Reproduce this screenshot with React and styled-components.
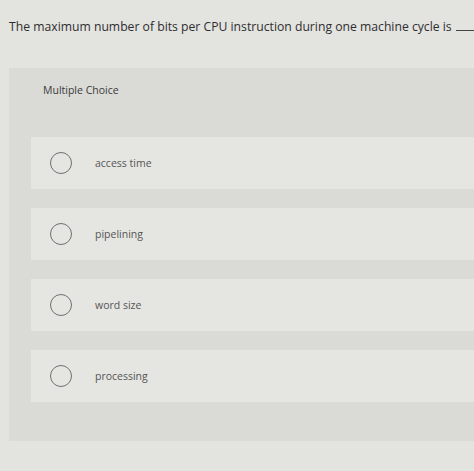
import React from 'react';
import styled, { createGlobalStyle } from 'styled-components';

const Global = createGlobalStyle`
	html, body {
		margin: 0;
		padding: 0;
		background: #e3e3e0;
	}
	body {
		font-family: "Open Sans", Lato, sans-serif;
		overflow: hidden;
	}
`;

const Page = styled.div`
	width: 474px;
	height: 471px;
	padding: 18px 0 0 9px;
	box-sizing: border-box;
	display: flex;
	flex-direction: column;
`;

const Question = styled.p`
	margin: 0;
	font-size: 12.2px;
	line-height: 18px;
	color: #2e2e2e;
	white-space: nowrap;
`;

const Blank = styled.span`
	display: inline-block;
	width: 40px;
	margin-left: 4px;
	border-bottom: 1px solid #444;
	vertical-align: baseline;
`;

const Panel = styled.section`
	margin-top: 32px;
	height: 373px;
	background: #dadad7;
	padding: 15px 0 0 22px;
	box-sizing: border-box;
`;

const Label = styled.div`
	padding-left: 12px;
	font-size: 10.5px;
	line-height: 15px;
	color: #3a3a3a;
`;

const Options = styled.div`
	margin-top: 39px;
	display: flex;
	flex-direction: column;
	gap: 19px;
`;

const Card = styled.div`
	height: 52px;
	background: #e5e5e2;
	display: flex;
	align-items: center;
	padding-left: 19px;
`;

const Radio = styled.span`
	width: 20px;
	height: 20px;
	border: 1.3px solid #707070;
	border-radius: 50%;
	flex-shrink: 0;
`;

const OptionText = styled.span`
	margin-left: 23px;
	font-size: 10.5px;
	color: #555;
`;

const choices = ['access time', 'pipelining', 'word size', 'processing'];

export default function App() {
	return (
		<Page>
			<Global />
			<Question>
				The maximum number of bits per CPU instruction during one machine cycle is<Blank />
			</Question>
			<Panel>
				<Label>Multiple Choice</Label>
				<Options>
					{choices.map((c) => (
						<Card key={c}>
							<Radio />
							<OptionText>{c}</OptionText>
						</Card>
					))}
				</Options>
			</Panel>
		</Page>
	);
}
